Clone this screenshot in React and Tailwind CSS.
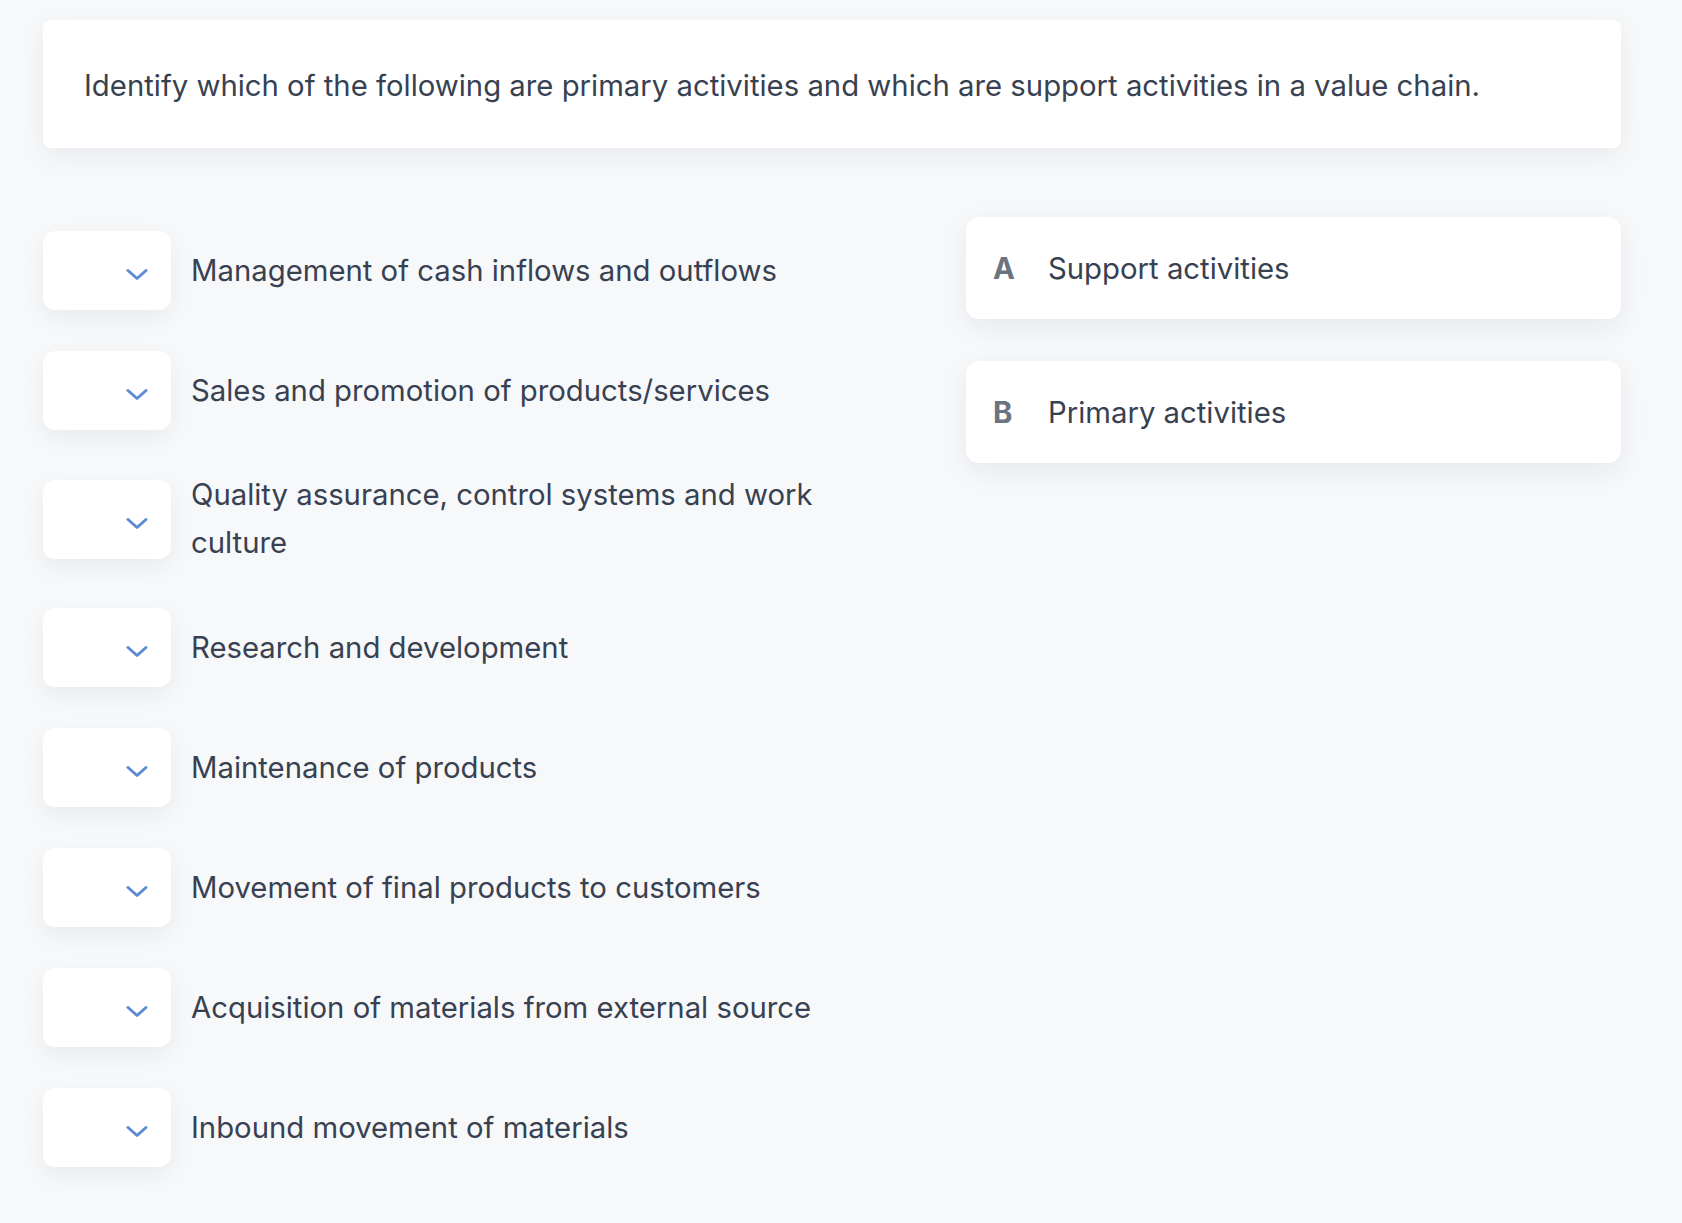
import React from "react";

const items = [
  "Management of cash inflows and outflows",
  "Sales and promotion of products/services",
  "Quality assurance, control systems and work culture",
  "Research and development",
  "Maintenance of products",
  "Movement of final products to customers",
  "Acquisition of materials from external source",
  "Inbound movement of materials",
];

const options = [
  { key: "A", label: "Support activities" },
  { key: "B", label: "Primary activities" },
];

const Chevron = () => (
  <svg width="22" height="13" viewBox="0 0 22 13" fill="none" className="mt-[8px]">
    <path
      d="M2 2.5 L11 10.5 L20 2.5"
      stroke="#5e8bd6"
      strokeWidth="3"
      strokeLinecap="round"
      strokeLinejoin="round"
    />
  </svg>
);

export default function App() {
  return (
    <div
      className="min-h-screen bg-[#f7f8fa] pt-[20px] pl-[43px] pr-[61px] pb-[56px] text-[#374151]"
      style={{ fontFamily: "Inter, 'Noto Sans', sans-serif" }}
    >
      <div className="bg-white rounded-lg h-[128px] flex items-center px-[41px] pt-[4px] shadow-[0_8px_28px_rgba(17,24,39,0.06)]">
        <p className="text-[29.3px] leading-[40px]">
          Identify which of the following are primary activities and which are support activities in a value chain.
        </p>
      </div>

      <div className="flex gap-[86px] mt-[69px]">
        {/* matching rows */}
        <div className="flex-1 pt-[14px] flex flex-col gap-[41px]">
          {items.map((text) => (
            <div key={text} className="flex items-center gap-[20px]">
              <div className="w-[128px] h-[79px] shrink-0 bg-white rounded-[12px] flex items-center justify-end pr-[23px] shadow-[0_8px_24px_rgba(17,24,39,0.06)]">
                <Chevron />
              </div>
              <span className="text-[29.3px] leading-[48px]">{text}</span>
            </div>
          ))}
        </div>

        {/* answer options */}
        <div className="w-[655px] flex flex-col gap-[42px]">
          {options.map((o) => (
            <div
              key={o.key}
              className="h-[102px] bg-white rounded-[13px] flex items-center pl-[27px] pt-[2px] shadow-[0_8px_28px_rgba(17,24,39,0.07)]"
            >
              <span className="w-[55px] text-[29.3px] font-bold text-[#6b7280]">{o.key}</span>
              <span className="text-[29.3px]">{o.label}</span>
            </div>
          ))}
        </div>
      </div>
    </div>
  );
}
